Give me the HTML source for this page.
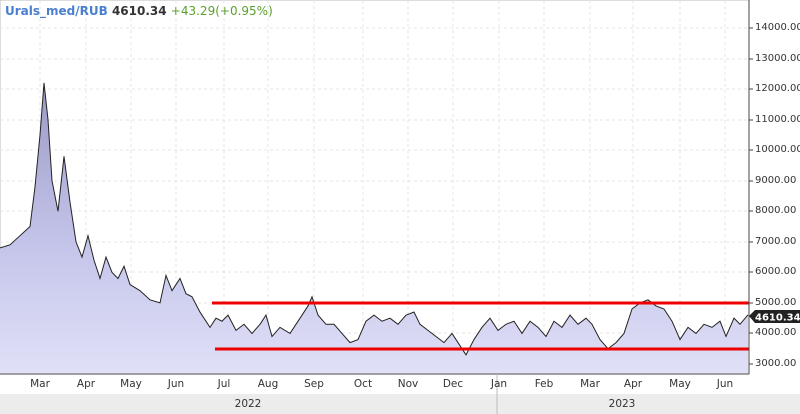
<!DOCTYPE html>
<html><head><style>
body{margin:0;width:800px;height:414px;overflow:hidden;background:#fff;font-family:"DejaVu Sans","Liberation Sans",sans-serif;}
.t{position:absolute;left:5px;top:4px;font-size:12px;font-weight:bold;white-space:nowrap}
.yl{position:absolute;left:755px;font-size:10px;color:#333;white-space:nowrap}
.ml{position:absolute;top:378px;font-size:10.5px;color:#333;transform:translateX(-50%)}
.yr{position:absolute;top:398px;font-size:10.5px;color:#333;transform:translateX(-50%)}
</style></head><body>
<svg width="800" height="414" style="position:absolute;left:0;top:0">
<rect x="0" y="394" width="800" height="20" fill="#ececec"/>
<rect x="0" y="0" width="749" height="374" fill="#fff" stroke="#bbb"/>
<g stroke="#e4e4e4" stroke-dasharray="3,3">
<line x1="0" x2="749" y1="28" y2="28"/><line x1="0" x2="749" y1="59" y2="59"/><line x1="0" x2="749" y1="89" y2="89"/><line x1="0" x2="749" y1="120" y2="120"/><line x1="0" x2="749" y1="150" y2="150"/><line x1="0" x2="749" y1="181" y2="181"/><line x1="0" x2="749" y1="211" y2="211"/><line x1="0" x2="749" y1="242" y2="242"/><line x1="0" x2="749" y1="272" y2="272"/><line x1="0" x2="749" y1="303" y2="303"/><line x1="0" x2="749" y1="333" y2="333"/><line x1="0" x2="749" y1="364" y2="364"/>
<line y1="0" y2="374" x1="40" x2="40"/><line y1="0" y2="374" x1="86" x2="86"/><line y1="0" y2="374" x1="131" x2="131"/><line y1="0" y2="374" x1="176" x2="176"/><line y1="0" y2="374" x1="224" x2="224"/><line y1="0" y2="374" x1="268" x2="268"/><line y1="0" y2="374" x1="314" x2="314"/><line y1="0" y2="374" x1="363" x2="363"/><line y1="0" y2="374" x1="408" x2="408"/><line y1="0" y2="374" x1="453" x2="453"/><line y1="0" y2="374" x1="499" x2="499"/><line y1="0" y2="374" x1="544" x2="544"/><line y1="0" y2="374" x1="590" x2="590"/><line y1="0" y2="374" x1="633" x2="633"/><line y1="0" y2="374" x1="680" x2="680"/><line y1="0" y2="374" x1="725" x2="725"/>
</g>
<defs><linearGradient id="g" x1="0" y1="1" x2="0" y2="0"><stop offset="0" stop-color="#9a9ac6"/><stop offset="0.55" stop-color="#c4c4ea"/><stop offset="1" stop-color="#e0e0f8"/></linearGradient></defs>
<g transform="matrix(1,0,0,-30.55,0,455.65)">
<polygon fill="url(#g)" points="0,2.7 0,6.8 10,6.9 20,7.2 30,7.5 35,8.8 40,10.5 44,12.2 48,11 52,9 58,8 64,9.8 70,8.3 76,7 82,6.5 88,7.2 94,6.4 100,5.8 106,6.5 112,6 118,5.8 124,6.2 130,5.6 140,5.4 150,5.1 160,5 166,5.9 172,5.4 180,5.8 186,5.3 192,5.2 200,4.7 210,4.2 216,4.5 222,4.4 228,4.6 236,4.1 244,4.3 252,4 260,4.3 266,4.6 272,3.9 280,4.2 290,4 300,4.5 308,4.9 312,5.2 318,4.6 326,4.3 334,4.3 342,4 350,3.7 358,3.8 366,4.4 374,4.6 382,4.4 390,4.5 398,4.3 406,4.6 414,4.7 420,4.3 428,4.1 436,3.9 444,3.7 452,4 460,3.6 466,3.3 474,3.8 482,4.2 490,4.5 498,4.1 506,4.3 514,4.4 522,4 530,4.4 538,4.2 546,3.9 554,4.4 562,4.2 570,4.6 578,4.3 586,4.5 592,4.3 600,3.8 608,3.5 616,3.7 624,4 632,4.8 640,5 648,5.1 656,4.9 664,4.8 672,4.4 680,3.8 688,4.2 696,4 704,4.3 712,4.2 720,4.4 726,3.9 734,4.5 740,4.3 748,4.61 748,2.7"/>
<polyline fill="none" stroke="#222" stroke-width="1" vector-effect="non-scaling-stroke" points="0,6.8 10,6.9 20,7.2 30,7.5 35,8.8 40,10.5 44,12.2 48,11 52,9 58,8 64,9.8 70,8.3 76,7 82,6.5 88,7.2 94,6.4 100,5.8 106,6.5 112,6 118,5.8 124,6.2 130,5.6 140,5.4 150,5.1 160,5 166,5.9 172,5.4 180,5.8 186,5.3 192,5.2 200,4.7 210,4.2 216,4.5 222,4.4 228,4.6 236,4.1 244,4.3 252,4 260,4.3 266,4.6 272,3.9 280,4.2 290,4 300,4.5 308,4.9 312,5.2 318,4.6 326,4.3 334,4.3 342,4 350,3.7 358,3.8 366,4.4 374,4.6 382,4.4 390,4.5 398,4.3 406,4.6 414,4.7 420,4.3 428,4.1 436,3.9 444,3.7 452,4 460,3.6 466,3.3 474,3.8 482,4.2 490,4.5 498,4.1 506,4.3 514,4.4 522,4 530,4.4 538,4.2 546,3.9 554,4.4 562,4.2 570,4.6 578,4.3 586,4.5 592,4.3 600,3.8 608,3.5 616,3.7 624,4 632,4.8 640,5 648,5.1 656,4.9 664,4.8 672,4.4 680,3.8 688,4.2 696,4 704,4.3 712,4.2 720,4.4 726,3.9 734,4.5 740,4.3 748,4.61"/>
</g>
<line x1="212" x2="749" y1="303" y2="303" stroke="#e00" stroke-width="3"/>
<line x1="215" x2="749" y1="349" y2="349" stroke="#e00" stroke-width="3"/>
<line x1="749" x2="749" y1="0" y2="374" stroke="#444"/>
<line x1="0" x2="749" y1="374" y2="374" stroke="#444"/>
<g stroke="#444">
<line x1="749" x2="753" y1="28" y2="28"/><line x1="749" x2="753" y1="59" y2="59"/><line x1="749" x2="753" y1="89" y2="89"/><line x1="749" x2="753" y1="120" y2="120"/><line x1="749" x2="753" y1="150" y2="150"/><line x1="749" x2="753" y1="181" y2="181"/><line x1="749" x2="753" y1="211" y2="211"/><line x1="749" x2="753" y1="242" y2="242"/><line x1="749" x2="753" y1="272" y2="272"/><line x1="749" x2="753" y1="303" y2="303"/><line x1="749" x2="753" y1="333" y2="333"/><line x1="749" x2="753" y1="364" y2="364"/>
<line x1="497" x2="497" y1="374" y2="414" stroke="#bbb"/>
</g>
<polygon points="749,316 755,310 800,310 800,323 755,323" fill="#222"/>
<text x="755" y="320.5" font-size="10" fill="#fff" font-family="DejaVu Sans,sans-serif" font-weight="bold">4610.34</text>
</svg>
<div class="t"><span style="color:#4a7fd0">Urals_med/RUB</span> <span style="color:#333">4610.34</span> <span style="color:#5aa02c;font-weight:normal">+43.29(+0.95%)</span></div>
<div class="yl" style="top:22px">14000.00</div><div class="yl" style="top:53px">13000.00</div><div class="yl" style="top:83px">12000.00</div><div class="yl" style="top:114px">11000.00</div><div class="yl" style="top:144px">10000.00</div><div class="yl" style="top:175px">9000.00</div><div class="yl" style="top:205px">8000.00</div><div class="yl" style="top:236px">7000.00</div><div class="yl" style="top:266px">6000.00</div><div class="yl" style="top:297px">5000.00</div><div class="yl" style="top:327px">4000.00</div><div class="yl" style="top:358px">3000.00</div>
<div class="ml" style="left:40px">Mar</div><div class="ml" style="left:86px">Apr</div><div class="ml" style="left:131px">May</div><div class="ml" style="left:176px">Jun</div><div class="ml" style="left:224px">Jul</div><div class="ml" style="left:268px">Aug</div><div class="ml" style="left:314px">Sep</div><div class="ml" style="left:363px">Oct</div><div class="ml" style="left:408px">Nov</div><div class="ml" style="left:453px">Dec</div><div class="ml" style="left:499px">Jan</div><div class="ml" style="left:544px">Feb</div><div class="ml" style="left:590px">Mar</div><div class="ml" style="left:633px">Apr</div><div class="ml" style="left:680px">May</div><div class="ml" style="left:725px">Jun</div>
<div class="yr" style="left:248px">2022</div><div class="yr" style="left:622px">2023</div>
</body></html>
